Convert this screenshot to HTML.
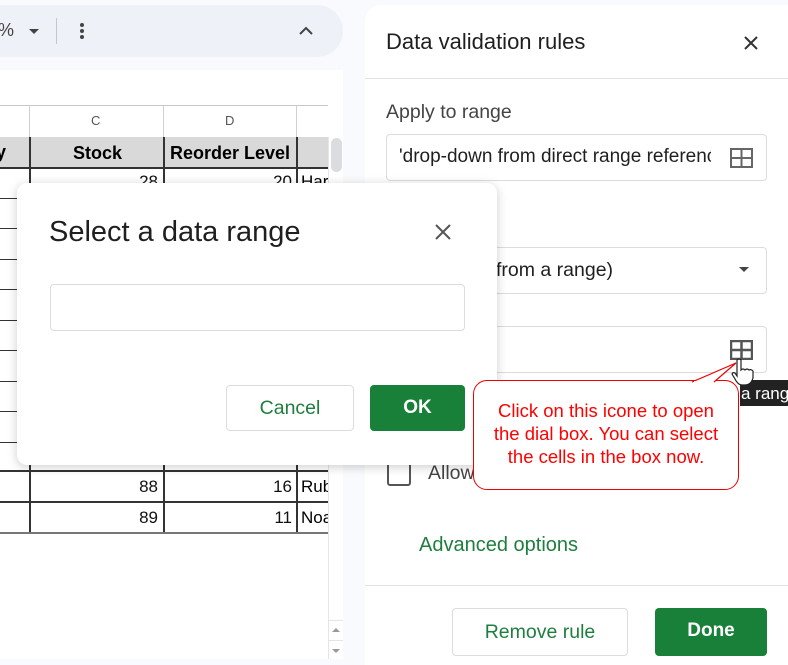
<!DOCTYPE html>
<html><head><style>
*{box-sizing:border-box;margin:0;padding:0}
body{width:788px;height:659px;overflow:hidden;background:#f8fafd;font-family:"Liberation Sans",Arial,sans-serif;position:relative}
.a{position:absolute}
.num{position:absolute;font-size:17px;color:#111;text-align:right}
</style></head><body>
<!-- toolbar -->
<div class="a" style="left:0;top:5px;width:343px;height:52px;background:#eef2f8;border-radius:0 26px 26px 0"></div>
<div class="a" style="left:-2px;top:20px;font-size:18px;color:#444">%</div>
<div class="a" style="left:29px;top:29px;width:0;height:0;border-left:5px solid transparent;border-right:5px solid transparent;border-top:5px solid #444"></div>
<div class="a" style="left:56px;top:18px;width:1px;height:26px;background:#c4c7c5"></div>
<div class="a" style="left:80px;top:23px;width:4px;height:4px;border-radius:2px;background:#444;box-shadow:0 6px 0 #444,0 12px 0 #444"></div>
<svg class="a" style="left:298px;top:25px" width="16" height="12"><path d="M2 9 L8 3 L14 9" stroke="#444" stroke-width="2" fill="none"/></svg>
<!-- sheet -->
<div class="a" style="left:0;top:70px;width:343px;height:589px;background:#fff"></div>
<div class="a" style="left:0;top:105px;width:328px;height:1px;background:#c7c7c7"></div>
<div class="a" style="left:29px;top:105px;width:1px;height:32px;background:#d0d0d0"></div>
<div class="a" style="left:163px;top:105px;width:1px;height:32px;background:#d0d0d0"></div>
<div class="a" style="left:296px;top:105px;width:1px;height:32px;background:#d0d0d0"></div>
<div class="a" style="left:91px;top:113px;font-size:13px;color:#555">C</div>
<div class="a" style="left:225px;top:113px;font-size:13px;color:#555">D</div>
<div class="a" style="left:0;top:137px;width:328px;height:32px;background:#d9d9d9;border-bottom:2px solid #333"></div>
<div class="a" style="left:73px;top:143px;font-size:18px;font-weight:bold">Stock</div>
<div class="a" style="left:170px;top:143px;font-size:18px;font-weight:bold">Reorder Level</div>
<div class="a" style="left:-4px;top:142px;font-size:18px;font-weight:bold">y</div>
<div class="a" style="left:29px;top:137px;width:2px;height:397px;background:#333"></div>
<div class="a" style="left:163px;top:137px;width:2px;height:397px;background:#333"></div>
<div class="a" style="left:296px;top:137px;width:2px;height:397px;background:#333"></div>
<div class="a" style="left:0;top:198px;width:17px;height:1px;background:#333;box-shadow:0 30px 0 #333,0 61px 0 #333,0 91px 0 #333,0 122px 0 #333,0 152px 0 #333,0 183px 0 #333,0 213px 0 #333,0 244px 0 #333"></div>
<div class="a" style="left:0;top:470px;width:328px;height:2px;background:#333"></div>
<div class="a" style="left:0;top:501px;width:328px;height:2px;background:#333"></div>
<div class="a" style="left:0;top:532px;width:328px;height:2px;background:#777"></div>
<div class="num" style="left:100px;top:477px;width:58px">88</div>
<div class="num" style="left:230px;top:477px;width:62px">16</div>
<div class="a" style="left:301px;top:477px;font-size:17px">Rub</div>
<div class="num" style="left:100px;top:508px;width:58px">89</div>
<div class="num" style="left:230px;top:508px;width:62px">11</div>
<div class="a" style="left:301px;top:508px;font-size:17px">Noa</div>
<div class="num" style="left:100px;top:172px;width:58px">28</div>
<div class="num" style="left:230px;top:172px;width:62px">20</div>
<div class="a" style="left:301px;top:172px;font-size:17px">Har</div>
<div class="a" style="left:328px;top:137px;width:15px;height:522px;background:#fff;border-left:1px solid #e5e5e5"></div>
<div class="a" style="left:331px;top:138px;width:11px;height:34px;background:#dadce0;border-radius:6px"></div>
<div class="a" style="left:328px;top:620px;width:15px;height:1px;background:#e5e5e5"></div>
<div class="a" style="left:328px;top:640px;width:15px;height:1px;background:#e5e5e5"></div>
<div class="a" style="left:332px;top:628px;border-left:4px solid transparent;border-right:4px solid transparent;border-bottom:4px solid #999"></div>
<div class="a" style="left:332px;top:649px;border-left:4px solid transparent;border-right:4px solid transparent;border-top:4px solid #999"></div>
<!-- right panel -->
<div class="a" style="left:365px;top:5px;width:430px;height:660px;background:#fff;border-radius:16px 0 0 0"></div>
<div class="a" style="left:386px;top:29px;font-size:22px;color:#1f1f1f">Data validation rules</div>
<svg class="a" style="left:743px;top:35px" width="16" height="16"><path d="M2 2L14 14M14 2L2 14" stroke="#333" stroke-width="2"/></svg>
<div class="a" style="left:365px;top:78px;width:423px;height:1px;background:#e3e3e3"></div>
<div class="a" style="left:386px;top:101px;font-size:19.5px;color:#444">Apply to range</div>
<div class="a" style="left:386px;top:134px;width:381px;height:47px;border:1px solid #dadce0;border-radius:4px"></div>
<div class="a" style="left:399px;top:146px;font-size:19px;color:#1f1f1f;width:312px;overflow:hidden;white-space:nowrap">'drop-down from direct range reference</div>
<svg class="a" style="left:730px;top:148px" width="23" height="20"><rect x="1" y="1" width="21" height="18" fill="none" stroke="#666" stroke-width="2"/><path d="M11.5 1V19M1 10H22" stroke="#666" stroke-width="2"/></svg>
<div class="a" style="left:386px;top:247px;width:381px;height:47px;border:1px solid #dadce0;border-radius:4px"></div>
<div class="a" style="left:496px;top:259px;font-size:19.5px;color:#1f1f1f">from a range)</div>
<div class="a" style="left:739px;top:267px;border-left:5px solid transparent;border-right:5px solid transparent;border-top:5px solid #444"></div>
<div class="a" style="left:386px;top:326px;width:381px;height:47px;border:1px solid #dadce0;border-radius:4px"></div>
<svg class="a" style="left:730px;top:340px" width="23" height="20"><rect x="1" y="1" width="21" height="18" fill="none" stroke="#555" stroke-width="2.5"/><path d="M11.5 1V19M1 10H22" stroke="#555" stroke-width="2.5"/></svg>
<div class="a" style="left:740px;top:380px;width:48px;height:26px;background:#222"></div>
<div class="a" style="left:741px;top:384px;font-size:17px;color:#fff;white-space:nowrap">a range</div>
<svg class="a" style="left:731px;top:358px" width="24" height="28"><path d="M6 2 Q8 0 10 2 V12 Q12 10 14 12 Q16 10 18 12 Q20 11 22 13 V20 Q20 27 14 27 H11 Q7 27 4 21 L1 16 Q2 14 4 15 L6 18 Z" fill="#fff" stroke="#222" stroke-width="1.2"/></svg>
<div class="a" style="left:387px;top:462px;width:24px;height:24px;border:2px solid #555;border-radius:3px"></div>
<div class="a" style="left:428px;top:462px;font-size:19.5px;color:#444">Allow</div>
<div class="a" style="left:419px;top:534px;font-size:20px;color:#1e7e3e">Advanced options</div>
<div class="a" style="left:365px;top:585px;width:423px;height:1px;background:#e3e3e3"></div>
<div class="a" style="left:452px;top:608px;width:176px;height:48px;border:1px solid #dadce0;border-radius:4px;color:#1e7e3e;font-size:19.5px;text-align:center;line-height:46px">Remove rule</div>
<div class="a" style="left:655px;top:608px;width:112px;height:48px;background:#188038;border-radius:4px;color:#fff;font-size:19px;font-weight:bold;text-align:center;line-height:46px">Done</div>
<!-- dialog -->
<div class="a" style="left:17px;top:183px;width:480px;height:282px;background:#fff;border-radius:10px;box-shadow:0 2px 10px rgba(0,0,0,.2)"></div>
<div class="a" style="left:49px;top:216px;font-size:29px;color:#1f1f1f">Select a data range</div>
<svg class="a" style="left:435px;top:224px" width="16" height="16"><path d="M1 1L15 15M15 1L1 15" stroke="#555" stroke-width="2"/></svg>
<div class="a" style="left:50px;top:284px;width:415px;height:47px;border:1px solid #dadce0;border-radius:4px"></div>
<div class="a" style="left:226px;top:385px;width:128px;height:46px;border:1px solid #dadce0;border-radius:4px;color:#1e7e3e;font-size:19.5px;text-align:center;line-height:44px">Cancel</div>
<div class="a" style="left:370px;top:385px;width:95px;height:46px;background:#188038;border-radius:4px;color:#fff;font-size:19px;font-weight:bold;text-align:center;line-height:46px">OK</div>
<!-- callout -->
<div class="a" style="left:473px;top:380px;width:266px;height:110px;background:#fff;border:1.5px solid #e00;border-radius:14px"></div>
<svg class="a" style="left:690px;top:360px" width="50" height="24"><path d="M2 22 L46 3 L24 22" fill="#fff" stroke="#e00" stroke-width="1.2"/><path d="M4 22.5H22" stroke="#fff" stroke-width="3"/></svg>
<div class="a" style="left:473px;top:399px;width:266px;text-align:center;font-size:18.5px;line-height:23px;color:#f00;white-space:nowrap">Click on this icone to open<br>the dial box. You can select<br>the cells in the box now.</div>
</body></html>
